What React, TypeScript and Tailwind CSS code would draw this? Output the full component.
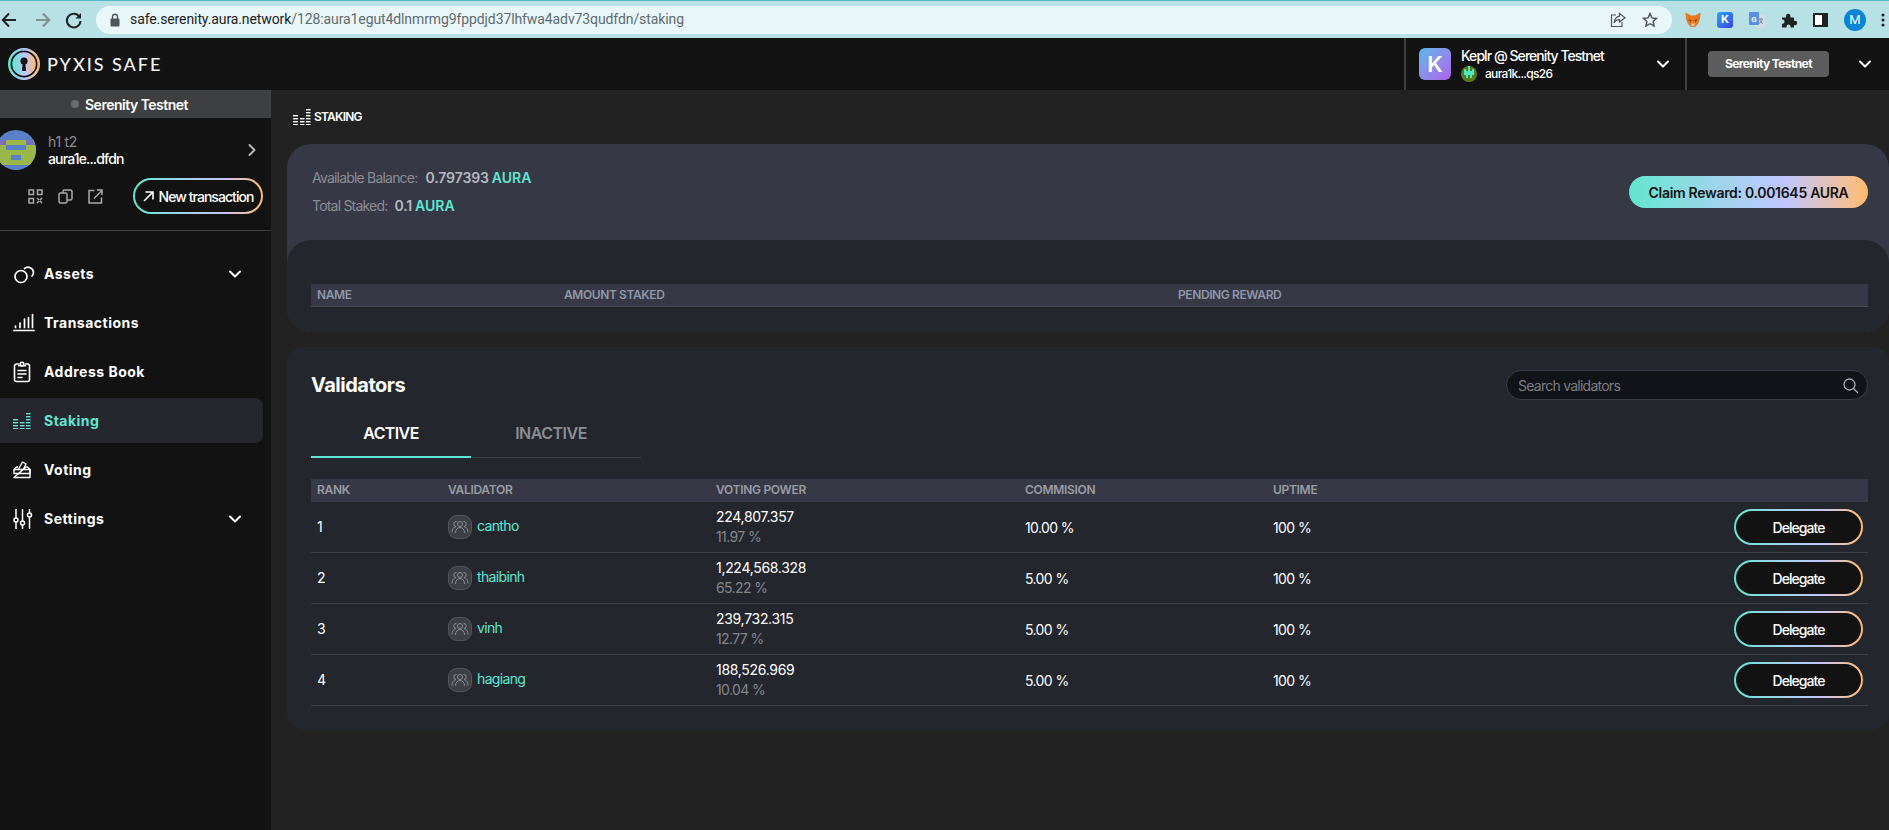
import React from "react";

const grad = "bg-linear-to-r from-[#5ee6d0] via-[#bfc6ff] via-65% to-[#ffba69]";

function Chevron({ className = "" }: { className?: string }) {
  return (
    <svg width="14" height="14" viewBox="0 0 14 14" fill="none" className={className}>
      <path d="M2 4.5 L7 9.5 L12 4.5" stroke="currentColor" strokeWidth="2" strokeLinecap="round" strokeLinejoin="round" />
    </svg>
  );
}

function ChromeBar() {
  return (
    <div className="h-[38px] shrink-0 bg-[#b8e1e5] border-t border-t-[#57b9bf] flex items-center font-['Roboto',sans-serif]">
      <svg width="96" height="24" viewBox="0 0 96 24" fill="none" className="shrink-0">
        <path d="M16 12H3M9 5.5 2.8 12 9 18.5" stroke="#202124" strokeWidth="2" />
        <path d="M36 12H49M43 5.5 49.2 12 43 18.5" stroke="#7f8f92" strokeWidth="2" />
        <path d="M79.5 9A6.8 6.8 0 1 0 80.5 13" stroke="#202124" strokeWidth="2" />
        <path d="M81 5V10.5H75.5Z" fill="#202124" />
      </svg>
      <div className="w-[1576px] h-[28px] shrink-0 rounded-l-full rounded-r-full bg-[#eaf7f8] flex items-center pl-[13px] pr-[14px]">
        <svg width="12" height="14" viewBox="0 0 12 14" className="mr-[9px] shrink-0">
          <rect x="1.5" y="5.5" width="9" height="8" rx="1" fill="#50575a" />
          <path d="M3.5 6V3.8a2.5 2.5 0 0 1 5 0V6" stroke="#50575a" strokeWidth="1.4" fill="none" />
        </svg>
        <span className="text-[14px] text-[#5f6b70] whitespace-nowrap tracking-[-0.1px]">
          <span className="text-[#202124]">safe.serenity.aura.network</span>/128:aura1egut4dlnmrmg9fppdjd37lhfwa4adv73qudfdn/staking
        </span>
        <div className="ml-auto flex items-center gap-[16px]">
          <svg width="16" height="16" viewBox="0 0 16 16" fill="none" stroke="#50575a" strokeWidth="1.2">
            <path d="M6 3H1.5V14.5H12V10" />
            <path d="M9.5 1.5 15 5.8 9.5 10V7.6C7 7.6 5 9 4 11 4 7.500 6.500 4.600 9.500 4.200Z" />
          </svg>
          <svg width="16" height="16" viewBox="0 0 24 24" fill="none" stroke="#50575a" strokeWidth="2.200">
            <path d="M12 2.500 14.900 8.800 21.800 9.600 16.700 14.200 18.100 21 12 17.600 5.900 21 7.300 14.200 2.200 9.600 9.100 8.800Z" />
          </svg>
        </div>
      </div>
      <div className="flex-1 flex items-center pl-[13px] gap-[16px]">
        <svg width="16" height="16" viewBox="0 0 16 16" className="shrink-0">
          <path d="M0.500 0.500 6 3.500H10L15.500 0.500 15 7 13 12 10 15H6L3 12 1 7Z" fill="#e8791f" />
          <path d="M3.500 7 6.500 8.200 5.500 10ZM12.500 7 9.500 8.200 10.500 10Z" fill="#5b3a1e" />
          <path d="M6 11.500H10L9.200 14H6.800Z" fill="#e8d5c3" />
        </svg>
        <div className="w-[16px] h-[16px] shrink-0 rounded-[3px] bg-linear-to-br from-[#29a6f0] to-[#3b3be0] flex items-center justify-center text-white text-[11px] font-bold font-['Inter',sans-serif]">K</div>
        <svg width="16" height="16" viewBox="0 0 16 16" className="shrink-0">
          <rect x="6" y="2.500" width="10" height="13" rx="1" fill="#d7dce0" />
          <path d="M10 7H14M12 6V7M13.300 7C13 9 11.500 11 10 11.500M10.800 7.500C11.300 9.500 12.800 11 14 11.500" stroke="#7f8a90" strokeWidth="1" fill="none" />
          <rect x="0" y="0" width="10" height="13" rx="1" fill="#5a8fe8" />
          <text x="5" y="9.500" textAnchor="middle" fontSize="8" fontWeight="700" fill="#fff" fontFamily="Roboto, sans-serif">G</text>
        </svg>
        <svg width="16" height="16" viewBox="0 0 16 16" className="shrink-0">
          <path d="M1 5.500H5V4A2.200 2.200 0 0 1 9.400 4V5.500H13V8.800H14A2.200 2.200 0 0 1 14 13.200H13V15.500H9.500V14.500A2 2 0 0 0 5.500 14.500V15.500H1V11.700H2A2.200 2.200 0 0 0 2 7.500H1Z" fill="#202124" />
        </svg>
        <div className="w-[15px] h-[14px] shrink-0 border-2 border-[#202124] border-r-[6px] bg-white" />
        <div className="w-[22px] h-[22px] shrink-0 rounded-full bg-[#0a84d6] flex items-center justify-center text-white text-[13px]">M</div>
        <svg width="4" height="14" viewBox="0 0 4 14" className="shrink-0 ml-[-1px]">
          <circle cx="2" cy="2" r="1.500" fill="#202124" />
          <circle cx="2" cy="7" r="1.500" fill="#202124" />
          <circle cx="2" cy="12" r="1.500" fill="#202124" />
        </svg>
      </div>
    </div>
  );
}

function Logo() {
  return (
    <svg width="32" height="32" viewBox="0 0 32 32" className="shrink-0">
      <defs>
        <linearGradient id="lg" x1="0" x2="1" y1="0" y2="0">
          <stop offset="0" stopColor="#5ee6d0" />
          <stop offset="0.55" stopColor="#bfc6ff" />
          <stop offset="1" stopColor="#ffba69" />
        </linearGradient>
      </defs>
      <circle cx="16" cy="16" r="16" fill="url(#lg)" />
      <circle cx="16" cy="16" r="13.500" fill="#121212" />
      <circle cx="16" cy="16" r="11.800" fill="url(#lg)" />
      <circle cx="16" cy="13" r="3.600" fill="#121212" />
      <path d="M14.700 14 H17.300 L18 23 H14 Z" fill="#121212" />
    </svg>
  );
}

function TopHeader() {
  return (
    <header className="h-[52px] shrink-0 bg-[#121212] flex items-stretch">
      <div className="flex items-center pl-[8px] gap-[7px] w-[1404px] shrink-0">
        <Logo />
        <span className="font-['Lato',sans-serif] text-[18px] font-medium tracking-[0.11em] text-[#f2f2f2] leading-none">PYXIS SAFE</span>
      </div>
      <div className="w-[283px] shrink-0 border-x-2 border-[#3e3f40] flex items-center pl-[13px]">
        <div className="w-[32px] h-[32px] rounded-[6px] bg-linear-to-br from-[#4fb6ea] to-[#a960e8] flex items-center justify-center text-white text-[22px] font-semibold">K</div>
        <div className="ml-[10px] flex flex-col gap-[2px]">
          <span className="text-[14px] font-medium text-white leading-[17px] tracking-[-0.95px]">Keplr @ Serenity Testnet</span>
          <div className="flex items-center gap-[8px]">
            <svg width="16" height="16" viewBox="0 0 16 16">
              <circle cx="8" cy="8" r="8" fill="#5b7a1a" />
              <path d="M7 0H9V5H11V3H13V9H11V12H9V9H7V12H5V9H3V3H5V5H7Z" fill="#4de8c2" />
            </svg>
            <span className="text-[12px] font-medium text-white leading-[16px] tracking-[-0.7px]">aura1k...qs26</span>
          </div>
        </div>
        <Chevron className="ml-auto mr-[15px] text-white" />
      </div>
      <div className="flex-1 flex items-center pl-[21px]">
        <div className="w-[121px] h-[26px] bg-[#5c5c5c] rounded-[4px] flex items-center justify-center text-white text-[12px] font-bold tracking-[-0.6px]">Serenity Testnet</div>
        <Chevron className="ml-[29px] text-white" />
      </div>
    </header>
  );
}

function AssetsIcon() {
  return (
    <svg width="22" height="22" viewBox="0 0 22 22" fill="none" stroke="currentColor" strokeWidth="1.700">
      <circle cx="8" cy="13.500" r="6" />
      <path d="M11.500 5.500A5.500 5.500 0 0 1 20.500 9.500C20.500 11 19.800 12 19 13" strokeLinecap="round" />
    </svg>
  );
}
function TxIcon() {
  return (
    <svg width="22" height="20" viewBox="0 0 22 20" fill="none" stroke="currentColor" strokeWidth="1.700" strokeLinecap="round">
      <path d="M1 17.500H21" />
      <path d="M2.500 14.500V13M7 14.500V10M11.500 14.500V6M15.500 14.500V4.500M19.500 14.500V1.500" />
    </svg>
  );
}
function BookIcon() {
  return (
    <svg width="18" height="22" viewBox="0 0 18 22" fill="none" stroke="currentColor" strokeWidth="1.600" strokeLinecap="round" strokeLinejoin="round">
      <path d="M5.500 3H3.500A2 2 0 0 0 1.500 5V18.500A2 2 0 0 0 3.500 20.500H14.500A2 2 0 0 0 16.500 18.500V5A2 2 0 0 0 14.500 3H12.500" />
      <circle cx="9" cy="3" r="1.800" />
      <path d="M5.500 4.800H12.500M5 9.500H13M5 13H13M5 16.500H9" />
    </svg>
  );
}
function StakeIcon({ className = "" }: { className?: string }) {
  const cols: [number, number[]][] = [
    [0, [6, 9, 12, 15]],
    [7, [9, 12, 15]],
    [13, [0, 3, 6, 9, 12, 15]],
  ];
  return (
    <svg width="18" height="16" viewBox="0 0 18 16" className={className}>
      {cols.map(([x, ys]) =>
        ys.map((y) => <rect key={x + "-" + y} x={x} y={y} width={x === 0 ? 5 : 4.5} height="1.400" fill="currentColor" />)
      )}
    </svg>
  );
}
function VoteIcon() {
  return (
    <svg width="18" height="18" viewBox="0 0 18 18" fill="none" stroke="currentColor" strokeWidth="1.400" strokeLinejoin="round">
      <path d="M1 8.500 3.500 6H5M13 6H14.500L17 8.500V16.500H1Z" />
      <path d="M1 8.500H17V12.500H1Z" />
      <path d="M5.500 8 9.500 1 13 3 10.500 8" />
    </svg>
  );
}
function SlidersIcon() {
  return (
    <svg width="20" height="20" viewBox="0 0 20 20" fill="none" stroke="currentColor" strokeWidth="1.500" strokeLinecap="round">
      <path d="M3 0.500V9M3 13V19.500M9.500 0.500V12M9.500 16V19.500M16.500 0.500V4M16.500 8V19.500" />
      <circle cx="3" cy="11" r="2" />
      <circle cx="9.500" cy="14" r="2" />
      <circle cx="16.500" cy="6" r="2" />
    </svg>
  );
}

function NavItem({ icon, label, chevron, active }: { icon: React.ReactNode; label: string; chevron?: boolean; active?: boolean }) {
  return (
    <div className={`h-[45px] w-[263px] rounded-r-[8px] flex items-center ${active ? "bg-[#26272e] text-[#5ee6d0]" : "text-white"}`}>
      <div className="w-[44px] pl-[13px] shrink-0 flex items-center">{icon}</div>
      <span className="text-[14px] font-bold tracking-[0.035em]">{label}</span>
      {chevron && <Chevron className="ml-auto mr-[21px] text-white" />}
    </div>
  );
}

function Sidebar() {
  return (
    <aside className="w-[271px] shrink-0 bg-[#121212] flex flex-col">
      <div className="h-[28px] bg-[#3e3f40] flex items-center pl-[71px] gap-[6px]">
        <span className="w-[8px] h-[8px] rounded-full bg-[#6a6a6a]" />
        <span className="text-[14px] font-semibold text-white tracking-[-0.5px]">Serenity Testnet</span>
      </div>
      <div className="flex items-center pt-[12px] pr-[14px]">
        <svg width="40" height="40" viewBox="0 0 40 40" className="ml-[-4px] shrink-0">
          <defs>
            <clipPath id="av"><circle cx="20" cy="20" r="20" /></clipPath>
          </defs>
          <g clipPath="url(#av)">
            <rect width="40" height="40" fill="#5b80c8" />
            <rect x="0" y="10" width="40" height="25" fill="#9ab84a" />
            <rect x="0" y="10" width="10" height="5" fill="#7b6fb8" />
            <rect x="30" y="10" width="10" height="5" fill="#7b6fb8" />
            <rect x="10" y="15" width="20" height="5" fill="#5b80c8" />
            <rect x="15" y="25" width="10" height="5" fill="#5b80c8" />
          </g>
        </svg>
        <div className="ml-[12px] flex flex-col">
          <span className="text-[14px] text-[#8a8d93] leading-[17px] tracking-[-0.3px]">h1 t2</span>
          <span className="text-[14px] font-medium text-white leading-[17px] tracking-[-0.85px]">aura1e...dfdn</span>
        </div>
        <svg width="10" height="14" viewBox="0 0 10 14" fill="none" className="ml-auto text-[#b5b5b5]">
          <path d="M2.500 2 7.500 7 2.500 12" stroke="currentColor" strokeWidth="2" strokeLinecap="round" strokeLinejoin="round" />
        </svg>
      </div>
      <div className="flex items-center mt-[8px] pl-[28px] pr-[8px]">
        <svg width="15" height="15" viewBox="0 0 15 15" fill="none" stroke="#a9a9a9" strokeWidth="1.500" className="mr-[15px]">
          <rect x="1" y="1" width="4.500" height="4.500" />
          <rect x="9.500" y="1" width="4.500" height="4.500" />
          <rect x="1" y="9.500" width="4.500" height="4.500" />
          <path d="M9 9 11 11M14 9 12 11M12 12 14 14M11 12 9 14" />
        </svg>
        <svg width="15" height="15" viewBox="0 0 15 15" fill="none" stroke="#a9a9a9" strokeWidth="1.500" className="mr-[15px]">
          <rect x="1" y="4" width="8" height="10" rx="1.500" />
          <path d="M5 4V2.500A1.500 1.500 0 0 1 6.500 1H12.500A1.500 1.500 0 0 1 14 2.500V9.500A1.500 1.500 0 0 1 12.500 11H9" />
        </svg>
        <svg width="15" height="15" viewBox="0 0 15 15" fill="none" stroke="#a9a9a9" strokeWidth="1.500">
          <path d="M6.500 1.500H1V14H13.500V8.500" />
          <path d="M6 9.500 14 1.500M9 1H14V6" />
        </svg>
        <div className={`ml-auto w-[130px] h-[36px] rounded-full p-[2px] ${grad}`}>
          <div className="w-full h-full rounded-full bg-[#121212] flex items-center justify-center gap-[5px] text-white">
            <svg width="11" height="11" viewBox="0 0 11 11" fill="none" stroke="currentColor" strokeWidth="1.600">
              <path d="M1 10 10 1M2.500 1H10V8.500" />
            </svg>
            <span className="text-[14px] font-medium tracking-[-0.95px] whitespace-nowrap">New transaction</span>
          </div>
        </div>
      </div>
      <div className="mt-[16px] h-px bg-[#3e3f40]" />
      <nav className="mt-[20px] flex flex-col gap-[4px]">
        <NavItem icon={<AssetsIcon />} label="Assets" chevron />
        <NavItem icon={<TxIcon />} label="Transactions" />
        <NavItem icon={<BookIcon />} label="Address Book" />
        <NavItem icon={<StakeIcon />} label="Staking" active />
        <NavItem icon={<VoteIcon />} label="Voting" />
        <NavItem icon={<SlidersIcon />} label="Settings" chevron />
      </nav>
    </aside>
  );
}

function ValidatorAvatar() {
  return (
    <div className="w-[24px] h-[24px] shrink-0 rounded-[9px] bg-[#3e3f46] border border-[#55565c] flex items-center justify-center">
      <svg width="18" height="14" viewBox="0 0 18 14" fill="none" stroke="#8d8e93" strokeWidth="1">
        <circle cx="9" cy="4" r="2.500" />
        <path d="M4.500 13C4.500 9.500 6.500 7.500 9 7.500S13.500 9.500 13.500 13" />
        <path d="M5.500 1.500A2.500 2.500 0 0 0 5 6.500C2.500 7 1 9.500 1 12.500M12.500 1.500A2.500 2.500 0 0 1 13 6.500C15.500 7 17 9.500 17 12.500" />
      </svg>
    </div>
  );
}

const rows = [
  { rank: 1, name: "cantho", power: "224,807.357", pct: "11.97 %", comm: "10.00 %" },
  { rank: 2, name: "thaibinh", power: "1,224,568.328", pct: "65.22 %", comm: "5.00 %" },
  { rank: 3, name: "vinh", power: "239,732.315", pct: "12.77 %", comm: "5.00 %" },
  { rank: 4, name: "hagiang", power: "188,526.969", pct: "10.04 %", comm: "5.00 %" },
];

const cols = "grid grid-cols-[131px_268px_309px_248px_1fr] pl-[6px]";

function ValidatorRow({ r }: { r: (typeof rows)[number] }) {
  return (
    <div className={`${cols} h-[51px] items-center border-b border-[#3a3c46]`}>
      <span className="text-[14px] text-white tracking-[-0.2px] pb-[1px]">{r.rank}</span>
      <div className="flex items-center gap-[5px]">
        <ValidatorAvatar />
        <span className="text-[14px] text-[#5ee6d0] tracking-[-0.65px] mb-[3px]">{r.name}</span>
      </div>
      <div className="flex flex-col">
        <span className="text-[14px] text-white leading-[20px] tracking-[-0.3px]">{r.power}</span>
        <span className="text-[14px] text-[#83858c] leading-[20px] tracking-[-0.6px]">{r.pct}</span>
      </div>
      <span className="text-[14px] text-white tracking-[-0.6px]">{r.comm}</span>
      <div className="flex items-center">
        <span className="text-[14px] text-white tracking-[-0.6px]">100 %</span>
        <div className={`ml-auto mr-[5px] w-[129px] h-[36px] rounded-full p-[2px] ${grad}`}>
          <div className="w-full h-full rounded-full bg-[#121212] flex items-center justify-center text-[14px] font-medium text-white tracking-[-0.95px]">Delegate</div>
        </div>
      </div>
    </div>
  );
}

function Main() {
  return (
    <main className="flex-1 min-w-0 bg-[#222222] pl-[16px] flex flex-col">
      <div className="h-[54px] shrink-0 flex items-center pl-[6px] gap-[3px] text-white">
        <StakeIcon className="text-white" />
        <span className="text-[12px] font-semibold tracking-[-0.8px]">STAKING</span>
      </div>
      <section className="h-[188px] shrink-0 rounded-[24px] bg-[#363846] flex flex-col">
        <div className="h-[96px] shrink-0 flex items-start pl-[25px] pr-[21px] pt-[24px]">
          <div className="flex flex-col gap-[8px]">
            <div className="text-[14px] leading-[20px] text-[#8a8d93] tracking-[-0.8px]">
              Available Balance:<span className="ml-[8px] font-semibold text-[#b5b8c0] tracking-[-0.1px]">0.797393</span>
              <span className="ml-[3px] font-semibold text-[#5ee6d0] tracking-normal">AURA</span>
            </div>
            <div className="text-[14px] leading-[20px] text-[#8a8d93] tracking-[-0.8px]">
              Total Staked:<span className="ml-[7px] font-semibold text-[#b5b8c0] tracking-[-0.1px]">0.1</span>
              <span className="ml-[3px] font-semibold text-[#5ee6d0] tracking-normal">AURA</span>
            </div>
          </div>
          <div className={`ml-auto mt-[8px] w-[239px] h-[32px] rounded-full ${grad} flex items-center justify-center text-[14px] font-semibold text-[#121212] tracking-[-0.3px]`}>
            Claim Reward: 0.001645 AURA
          </div>
        </div>
        <div className="flex-1 rounded-[24px] bg-[#24262e] pt-[44px] pl-[24px] pr-[21px]">
          <div className="h-[23px] bg-[#363846] border-b border-[#4a4a4a] grid grid-cols-[247px_614px_1fr] items-center pl-[6px] text-[12px] font-semibold text-[#8f97a8] tracking-[-0.4px]">
            <span>NAME</span>
            <span>AMOUNT STAKED</span>
            <span>PENDING REWARD</span>
          </div>
        </div>
      </section>
      <section className="mt-[15px] h-[383px] shrink-0 rounded-[16px] bg-[#24262e] pl-[24px] pr-[21px]">
        <div className="flex items-center justify-between pt-[23px] h-[53px]">
          <h2 className="text-[20px] font-bold text-white tracking-[-0.5px] leading-[28px]">Validators</h2>
          <div className="w-[362px] h-[30px] rounded-full bg-[#121318] border border-[#3a3c46] flex items-center pl-[11px] pr-[8px]">
            <span className="text-[14px] text-[#7a7c82] tracking-[-0.75px]">Search validators</span>
            <svg width="17" height="17" viewBox="0 0 17 17" fill="none" stroke="#a9abb0" strokeWidth="1.300" className="ml-auto">
              <circle cx="7.500" cy="7.500" r="5.500" />
              <path d="M11.500 11.500 15.500 15.500" strokeLinecap="round" />
            </svg>
          </div>
        </div>
        <div className="mt-[17px] w-[330px] h-[41px] flex border-b border-[#3a3c46]">
          <div className="w-[160px] h-[41px] border-b-2 border-[#5ee6d0] flex items-center justify-center text-[16px] font-semibold text-white tracking-[-0.6px] pb-[8px]">ACTIVE</div>
          <div className="w-[160px] flex items-center justify-center text-[16px] font-semibold text-[#8a8d93] tracking-[-0.5px] pb-[8px]">INACTIVE</div>
        </div>
        <div className={`${cols} mt-[21px] h-[23px] bg-[#363846] items-center text-[12px] font-semibold text-[#9a9ca3] tracking-[-0.3px] pb-[1px]`}>
          <span>RANK</span>
          <span>VALIDATOR</span>
          <span>VOTING POWER</span>
          <span>COMMISION</span>
          <span>UPTIME</span>
        </div>
        {rows.map((r) => (
          <ValidatorRow key={r.rank} r={r} />
        ))}
      </section>
    </main>
  );
}

export default function App() {
  return (
    <div className="h-screen w-full overflow-hidden flex flex-col bg-[#222222] font-['Inter',sans-serif]">
      <ChromeBar />
      <TopHeader />
      <div className="flex-1 min-h-0 flex">
        <Sidebar />
        <Main />
      </div>
    </div>
  );
}
